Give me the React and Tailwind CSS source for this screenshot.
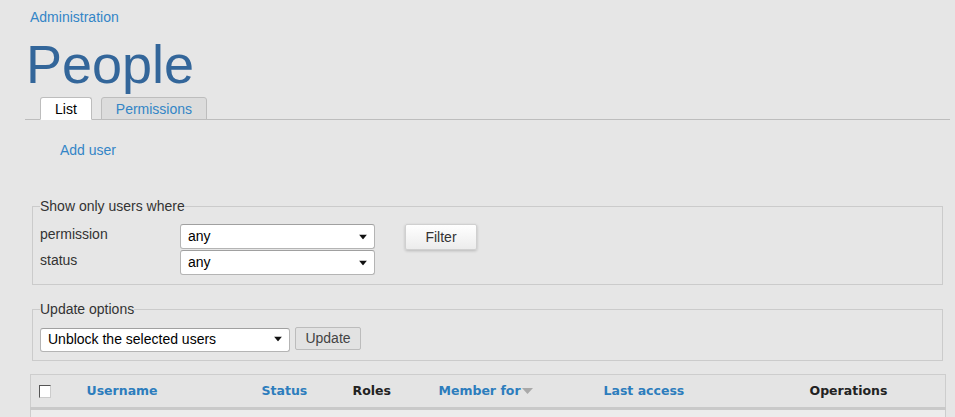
import React, { useState } from 'react';

const LINK = 'text-[#3385c6]';

function Select({ value, options, className }) {
    return (
        <div className={`relative ${className}`}>
            <select
                defaultValue={value}
                className="w-full h-full appearance-none bg-white border border-[#b4b4b4] border-t-[#a0a0a0] rounded-[3px] pl-[7px] pr-6 text-[14px] text-black focus:outline-none"
            >
                {options.map((o) => (
                    <option key={o} value={o}>{o}</option>
                ))}
            </select>
            <svg className="pointer-events-none absolute right-[8px] top-1/2 -translate-y-1/2" width="8" height="5" viewBox="0 0 8 5">
                <path d="M0 0h8L4 5z" fill="#111" />
            </svg>
        </div>
    );
}

const App = () => {
    const [tab, setTab] = useState('list');

    return (
        <div className="h-screen overflow-hidden bg-[#e6e6e6] font-['Liberation_Sans',Arial,sans-serif] text-[#333] pl-[25px] pr-[5px] pt-[9px]">
            <a href="#" className={`block pl-[5px] text-[14px] leading-[16px] ${LINK}`}>Administration</a>
            <h1 className="mt-[12px] pl-[1px] text-[54px] leading-[54px] font-normal text-[#33669a]">People</h1>

            <div className="mt-[6px] flex gap-[9px] pl-[15px] border-b border-[#bdbdbd] h-[23px]">
                <button
                    onClick={() => setTab('list')}
                    className={`h-[23px] px-[14px] text-[14px] leading-[20px] rounded-t-[3px] border border-[#bdbdbd] ${tab === 'list' ? 'bg-white text-black border-b-white' : 'bg-[#dcdcdc] ' + LINK}`}
                >
                    List
                </button>
                <button
                    onClick={() => setTab('permissions')}
                    className={`h-[23px] px-[14px] text-[14px] leading-[20px] rounded-t-[3px] border border-[#bdbdbd] ${tab === 'permissions' ? 'bg-white text-black border-b-white' : 'bg-[#dcdcdc] ' + LINK}`}
                >
                    Permissions
                </button>
            </div>

            <a href="#" className={`block mt-[22px] pl-[35px] text-[14px] leading-[16px] ${LINK}`}>Add user</a>

            <fieldset className="mt-[40px] ml-[7px] mr-[7px] border border-[#cbcbcb] px-[7px] pb-[9px]">
                <legend className="text-[14px] leading-[16px] text-[#333]">Show only users where</legend>
                <div className="flex pt-[10px]">
                    <div className="flex flex-col gap-[1px]">
                        <div className="flex items-start">
                            <label className="w-[140px] pt-[2px] text-[14px] leading-[16px]">permission</label>
                            <Select value="any" options={['any']} className="w-[195px] h-[25px]" />
                        </div>
                        <div className="flex items-start">
                            <label className="w-[140px] pt-[2px] text-[14px] leading-[16px]">status</label>
                            <Select value="any" options={['any', 'active', 'blocked']} className="w-[195px] h-[25px]" />
                        </div>
                    </div>
                    <button className="ml-[30px] w-[72px] h-[26px] text-[14px] text-[#333] rounded-[2px] border border-[#d0d0d0] bg-gradient-to-b from-white to-[#ececec] shadow-[0_1px_3px_rgba(0,0,0,0.2)]">
                        Filter
                    </button>
                </div>
            </fieldset>

            <fieldset className="mt-[16px] ml-[7px] mr-[7px] border border-[#cbcbcb] px-[7px] pb-[9px]">
                <legend className="text-[14px] leading-[16px] text-[#333]">Update options</legend>
                <div className="flex items-start gap-[5px] pt-[10px]">
                    <Select
                        value="Unblock the selected users"
                        options={['Unblock the selected users', 'Block the selected users', 'Cancel the selected user accounts']}
                        className="w-[250px] h-[24px]"
                    />
                    <button className="w-[66px] h-[23px] text-[14px] text-[#444] rounded-[2px] border border-[#bcbcbc] bg-[#e2e2e2]">
                        Update
                    </button>
                </div>
            </fieldset>

            <table className="mt-[13px] ml-[5px] w-[915px] table-fixed border-collapse border border-[#cdcdcd] font-['DejaVu_Sans',Verdana,sans-serif] text-[12.5px] font-bold">
                <colgroup>
                    <col className="w-[48px]" />
                    <col className="w-[175px]" />
                    <col className="w-[91px]" />
                    <col className="w-[86px]" />
                    <col className="w-[165px]" />
                    <col className="w-[206px]" />
                    <col className="w-[144px]" />
                </colgroup>
                <thead>
                    <tr className="h-[34px] bg-[#e4e4e4] border-b-[3px] border-[#c9c9c9] text-left">
                        <th className="pl-[8px]">
                            <span className="block w-[12px] h-[13px] bg-white border border-[#555] border-r-[#ccc] border-b-[#ccc]"></span>
                        </th>
                        <th className="pl-[8px]"><a href="#" className="text-[#2d7dbd]">Username</a></th>
                        <th className="pl-[8px]"><a href="#" className="text-[#2d7dbd]">Status</a></th>
                        <th className="pl-[8px] text-[#222]">Roles</th>
                        <th className="pl-[8px]">
                            <a href="#" className="text-[#2d7dbd] inline-flex items-center">
                                Member for
                                <svg width="11" height="6" viewBox="0 0 11 6" className="ml-[1px]">
                                    <path d="M0 0h11L5.5 6z" fill="#a9a9a9" />
                                </svg>
                            </a>
                        </th>
                        <th className="pl-[8px]"><a href="#" className="text-[#2d7dbd]">Last access</a></th>
                        <th className="pl-[8px] text-[#222]">Operations</th>
                    </tr>
                </thead>
                <tbody>
                    <tr className="h-[30px] bg-[#ececec]">
                        <td colSpan={7}></td>
                    </tr>
                </tbody>
            </table>
        </div>
    );
};

export default App;
